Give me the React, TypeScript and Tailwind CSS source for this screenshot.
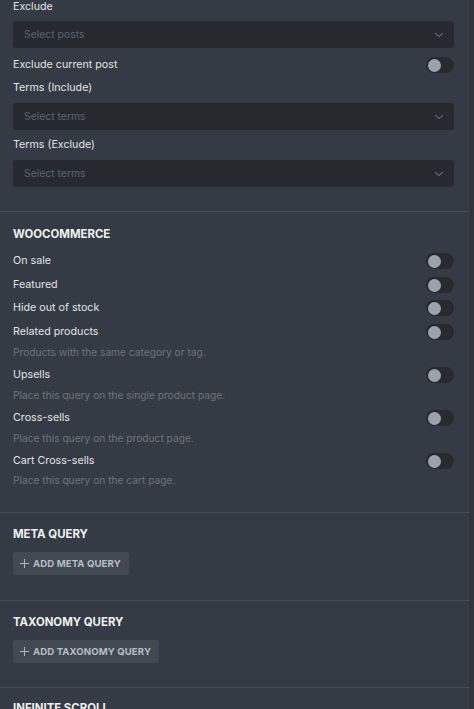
import React from "react";

function Chevron() {
  return (
    <svg width="10" height="10" viewBox="0 0 10 10" fill="none">
      <path d="M1.5 3.5 L5 6.5 L8.5 3.5" stroke="#5c636b" strokeWidth="1.2" strokeLinecap="round" strokeLinejoin="round" />
    </svg>
  );
}

function Select({ placeholder }: { placeholder: string }) {
  return (
    <div className="flex h-[27px] items-center justify-between rounded-[3px] bg-[#262a2f] pl-[11px] pr-[10px]">
      <span className="text-[10.4px] leading-[14px] text-[#5d646c]">{placeholder}</span>
      <Chevron />
    </div>
  );
}

function Toggle() {
  return (
    <div className="flex h-[16px] w-[28px] items-center rounded-full bg-[#272b30] pl-[2px]">
      <div className="h-[13px] w-[13px] rounded-full bg-[#9aa2ac]" />
    </div>
  );
}

function Label({ children }: { children: React.ReactNode }) {
  return <span className="h-[14px] text-[10.7px] leading-[14px] text-[#e1e4e7]">{children}</span>;
}

function ToggleRow({ label }: { label: string }) {
  return (
    <div className="flex h-[16px] items-center justify-between">
      <Label>{label}</Label>
      <Toggle />
    </div>
  );
}

function Desc({ children }: { children: React.ReactNode }) {
  return <div className="h-[14px] text-[10.2px] leading-[14px] text-[#6c737b]">{children}</div>;
}

function Heading({ children }: { children: React.ReactNode }) {
  return <div className="h-[14px] text-[11.4px] font-bold leading-[14px] text-[#eef0f2]">{children}</div>;
}

function AddButton({ label }: { label: string }) {
  return (
    <div className="flex h-[23px] items-center gap-[3px] self-start rounded-[3px] bg-[#424953] pl-[6px] pr-[8px]">
      <svg width="11" height="11" viewBox="0 0 11 11" fill="none">
        <path d="M5.5 1 V10 M1 5.5 H10" stroke="#aab1b9" strokeWidth="1.1" />
      </svg>
      <span className="text-[9.6px] font-bold leading-[12px] tracking-[0.1px] text-[#b7bdc4]">{label}</span>
    </div>
  );
}

export default function App() {
  return (
    <div
      className="flex h-[709px] w-[474px] overflow-hidden bg-[#353b44]"
      style={{ fontFamily: "Inter, 'Noto Sans', sans-serif" }}
    >
      <div className="flex min-w-0 flex-1 flex-col border-r border-[#2a2f35]">
        {/* Top section */}
        <div className="flex flex-col border-b border-[#454c55] pb-[24px] pl-[13px] pr-[16px]">
          <div className="flex">
            <Label>Exclude</Label>
          </div>
          <div className="mt-[7px]">
            <Select placeholder="Select posts" />
          </div>
          <div className="mt-[9px]">
            <ToggleRow label="Exclude current post" />
          </div>
          <div className="mt-[8px] flex">
            <Label>Terms (Include)</Label>
          </div>
          <div className="mt-[8px]">
            <Select placeholder="Select terms" />
          </div>
          <div className="mt-[8px] flex">
            <Label>Terms (Exclude)</Label>
          </div>
          <div className="mt-[8px]">
            <Select placeholder="Select terms" />
          </div>
        </div>

        {/* WooCommerce */}
        <div className="flex flex-col border-b border-[#454c55] pb-[25px] pl-[13px] pr-[16px] pt-[15px]">
          <Heading>WOOCOMMERCE</Heading>
          <div className="mt-[12px]">
            <ToggleRow label="On sale" />
          </div>
          <div className="mt-[8px]">
            <ToggleRow label="Featured" />
          </div>
          <div className="mt-[7px]">
            <ToggleRow label="Hide out of stock" />
          </div>
          <div className="mt-[8px]">
            <ToggleRow label="Related products" />
          </div>
          <div className="mt-[5px]">
            <Desc>Products with the same category or tag.</Desc>
          </div>
          <div className="mt-[8px]">
            <ToggleRow label="Upsells" />
          </div>
          <div className="mt-[5px]">
            <Desc>Place this query on the single product page.</Desc>
          </div>
          <div className="mt-[8px]">
            <ToggleRow label="Cross-sells" />
          </div>
          <div className="mt-[5px]">
            <Desc>Place this query on the product page.</Desc>
          </div>
          <div className="mt-[8px]">
            <ToggleRow label="Cart Cross-sells" />
          </div>
          <div className="mt-[4px]">
            <Desc>Place this query on the cart page.</Desc>
          </div>
        </div>

        {/* Meta query */}
        <div className="flex flex-col border-b border-[#454c55] pb-[25px] pl-[13px] pr-[16px] pt-[14px]">
          <Heading>META QUERY</Heading>
          <div className="mt-[11px] flex">
            <AddButton label="ADD META QUERY" />
          </div>
        </div>

        {/* Taxonomy query */}
        <div className="flex flex-col border-b border-[#454c55] pb-[24px] pl-[13px] pr-[16px] pt-[14px]">
          <Heading>TAXONOMY QUERY</Heading>
          <div className="mt-[11px] flex">
            <AddButton label="ADD TAXONOMY QUERY" />
          </div>
        </div>

        {/* Infinite scroll */}
        <div className="flex flex-col pl-[13px] pr-[16px] pt-[13px]">
          <Heading>INFINITE SCROLL</Heading>
        </div>
      </div>
      <div className="w-[3px] bg-[#30363e]" />
    </div>
  );
}
